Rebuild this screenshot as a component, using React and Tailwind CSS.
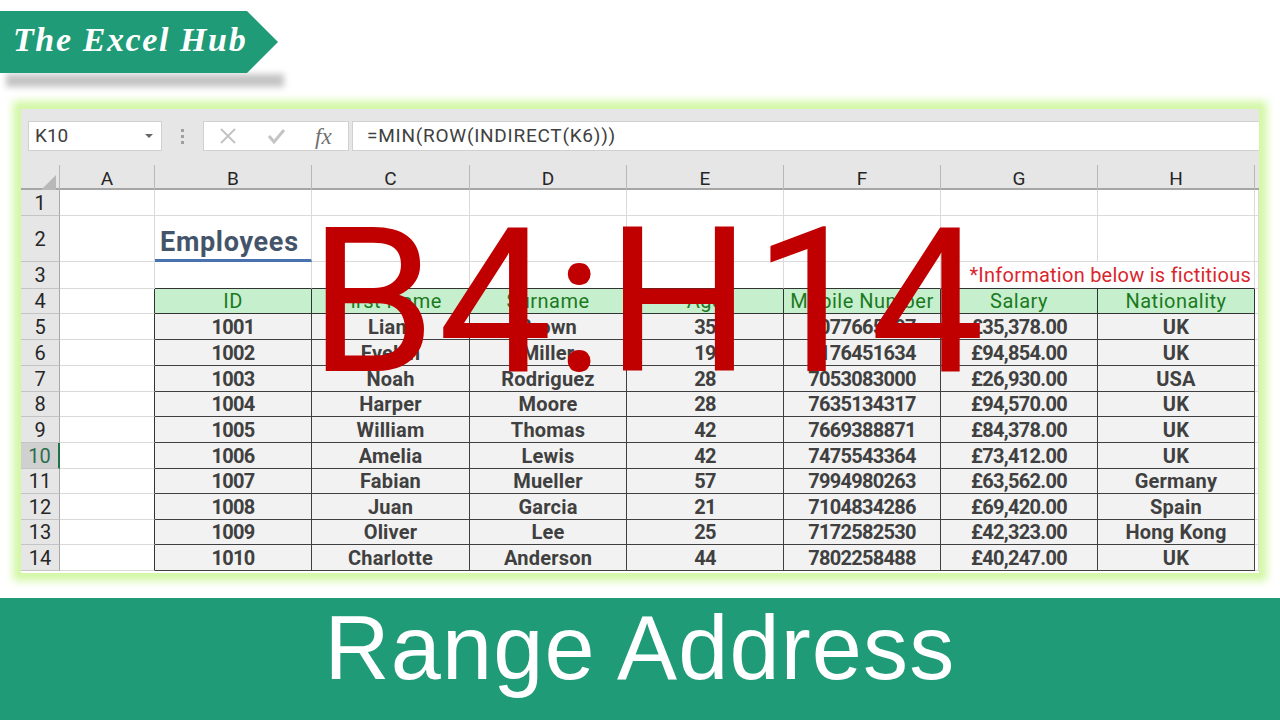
const COLS = ["B", "C", "D", "E", "F", "G", "H"];
const HEAD = ["ID", "First Name", "Surname", "Age", "Mobile Number", "Salary", "Nationality"];
const PEOPLE = [
  ["1001", "Liam", "Brown", "35", "7077665597", "£35,378.00", "UK"],
  ["1002", "Evelyn", "Miller", "19", "7176451634", "£94,854.00", "UK"],
  ["1003", "Noah", "Rodriguez", "28", "7053083000", "£26,930.00", "USA"],
  ["1004", "Harper", "Moore", "28", "7635134317", "£94,570.00", "UK"],
  ["1005", "William", "Thomas", "42", "7669388871", "£84,378.00", "UK"],
  ["1006", "Amelia", "Lewis", "42", "7475543364", "£73,412.00", "UK"],
  ["1007", "Fabian", "Mueller", "57", "7994980263", "£63,562.00", "Germany"],
  ["1008", "Juan", "Garcia", "21", "7104834286", "£69,420.00", "Spain"],
  ["1009", "Oliver", "Lee", "25", "7172582530", "£42,323.00", "Hong Kong"],
  ["1010", "Charlotte", "Anderson", "44", "7802258488", "£40,247.00", "UK"],
];
const NUMERIC = [0, 3, 4, 5];

const GRID = "grid grid-cols-[39px_95px_157px_158px_157px_157px_157px_157px_157px_4px]";
const CENTER = "flex items-center justify-center";

function RowHead({ n }) {
  const active = n === 10;
  return (
    <div
      className={`${CENTER} text-[20px] border-b border-[#c4c4c4] ${
        active ? "bg-[#d0d0d0] text-[#2b6e4d] border-r-2 border-r-[#217346]" : "bg-[#e6e6e6] text-[#262626] border-r border-r-[#a8a8a8]"
      }`}
    >
      {n}
    </div>
  );
}

function Blank({ className = "" }) {
  return <div className={`border-b border-r border-[#dadada] ${className}`} />;
}

function FormulaBar() {
  return (
    <div className="h-[56px] bg-[#e6e6e6] pt-[12px] flex items-start">
      <div className="ml-[7px] w-[134px] h-[30px] bg-white border border-[#d0d0d0] flex items-center justify-between pl-[6px] pr-[8px] text-[19px] text-[#404040]">
        K10
        <span className="w-0 h-0 border-x-[4px] border-x-transparent border-t-[4px] border-t-[#666666]" />
      </div>
      <div className="w-[41px] h-[30px] flex flex-col items-center justify-center gap-[3px]">
        <span className="w-[3px] h-[3px] bg-[#a0a0a0]" />
        <span className="w-[3px] h-[3px] bg-[#a0a0a0]" />
        <span className="w-[3px] h-[3px] bg-[#a0a0a0]" />
      </div>
      <div className="w-[146px] h-[30px] bg-white border border-[#d0d0d0] flex items-center pl-[15px]">
        <svg width="18" height="18" viewBox="0 0 18 18" fill="none" stroke="#c4c4c4" strokeWidth="2">
          <path d="M2 2 L16 16 M16 2 L2 16" />
        </svg>
        <svg className="ml-[30px]" width="20" height="18" viewBox="0 0 20 18" fill="none" stroke="#c4c4c4" strokeWidth="3">
          <path d="M2 9 L7 15 L17 3" />
        </svg>
        <span className="ml-[28px] text-[23px] italic leading-none text-[#707070] font-['Liberation_Serif',serif]">fx</span>
      </div>
      <div className="ml-[3px] flex-1 h-[30px] bg-white border-y border-l border-[#d0d0d0] flex items-center pl-[14px] text-[19px] text-[#404040] tracking-[0.75px]">
        =MIN(ROW(INDIRECT(K6)))
      </div>
    </div>
  );
}

function Sheet() {
  return (
    <div className="mt-[36px] ml-[21px] w-[1238px] h-[464px] bg-white shadow-[0_0_8px_8px_#d3f8a6] font-['Roboto',sans-serif]">
      <FormulaBar />

      {/* column letters */}
      <div className={`${GRID} h-[25px] bg-[#e6e6e6] border-b-2 border-[#a6a6a6]`}>
        <div className="flex items-end justify-end pr-[3px] pb-[3px] border-r border-[#b8b8b8]">
          <svg width="17" height="17" viewBox="0 0 17 17">
            <path d="M0 17 L17 0 L17 17 Z" fill="#b8b8b8" />
          </svg>
        </div>
        {["A", ...COLS].map((c) => (
          <div key={c} className={`${CENTER} pb-[1px] text-[19px] text-[#262626] border-r border-[#b8b8b8]`}>
            {c}
          </div>
        ))}
        <div />
      </div>

      <div className={`${GRID} grid-rows-[26px_46px_27px_25px_26px_26px_26px_25px_26px_26px_25px_26px_25px_26px]`}>
        {/* rows 1-3 */}
        <RowHead n={1} />
        {["a", ...COLS, "z"].map((c) => (
          <Blank key={c} />
        ))}

        <RowHead n={2} />
        <Blank />
        <div className="flex items-center pl-[5px] pt-[9px] border-b-[3px] border-r border-b-[#4a72b0] border-r-[#dadada] text-[27px] tracking-[0.7px] font-bold text-[#44546a] whitespace-nowrap">
          Employees
        </div>
        {["C", "D", "E", "F", "G", "H", "z"].map((c) => (
          <Blank key={c} />
        ))}

        <RowHead n={3} />
        <Blank />
        {["B", "C", "D", "E", "F"].map((c) => (
          <div key={c} className="border-b border-r border-b-[#333333] border-r-[#dadada]" />
        ))}
        <div className="border-b border-[#333333]" />
        <div className="border-b border-r border-b-[#333333] border-r-[#dadada] flex items-center justify-end pr-[3px] whitespace-nowrap text-[20px] text-[#d9262e] tracking-[0.25px]">
          *Information below is fictitious
        </div>
        <Blank />

        {/* header of the table */}
        <RowHead n={4} />
        <div className="border-b border-r border-b-[#dadada] border-r-[#333333]" />
        {HEAD.map((h) => (
          <div key={h} className={`${CENTER} bg-[#c6efce] text-[20px] tracking-[0.5px] text-[#1b7a20] whitespace-nowrap border-b border-r border-[#333333]`}>
            {h}
          </div>
        ))}
        <Blank />

        {/* table rows */}
        {PEOPLE.map((p, i) => (
          <div key={p[0]} className="contents">
            <RowHead n={i + 5} />
            <div className="border-b border-r border-b-[#dadada] border-r-[#333333]" />
            {p.map((v, j) => (
              <div
                key={j}
                className={`${CENTER} bg-[#f2f2f2] text-[20px] font-bold text-[#404040] whitespace-nowrap border-b border-r border-[#404040] ${
                  NUMERIC.includes(j) ? "tracking-[-0.7px]" : "tracking-[0.2px]"
                }`}
              >
                {v}
              </div>
            ))}
            <Blank />
          </div>
        ))}
      </div>
    </div>
  );
}

export default function App() {
  return (
    <div className="relative w-[1280px] h-[720px] bg-white overflow-hidden flex flex-col">
      {/* logo ribbon */}
      <div className="relative mt-[11px] w-[278px] h-[62px]">
        <div className="absolute left-[6px] right-[-6px] top-[63px] h-[13px] bg-[#c4c4c4] blur-[3px]" />
        <div className="relative h-full bg-[#1f9b77] [clip-path:polygon(0_0,247px_0,278px_31px,247px_62px,0_62px)] flex items-center pl-[13px] pb-[4px]">
          <span className="text-[34px] leading-none font-bold italic text-white tracking-[1.6px] whitespace-nowrap font-['Liberation_Serif',serif]">
            The Excel Hub
          </span>
        </div>
      </div>

      <Sheet />

      {/* big red range label, sits over the table */}
      <div className="absolute left-[309px] top-[187px] text-[203px] tracking-[2.5px] leading-[230px] text-[#c00000] whitespace-nowrap font-['Roboto',sans-serif]">
        B4:H14
      </div>

      <div className="mt-auto h-[122px] bg-[#1f9b77] flex items-center justify-center pb-[23px] text-[90px] tracking-[1.2px] leading-none text-white font-['Liberation_Sans',sans-serif]">
        Range Address
      </div>
    </div>
  );
}
